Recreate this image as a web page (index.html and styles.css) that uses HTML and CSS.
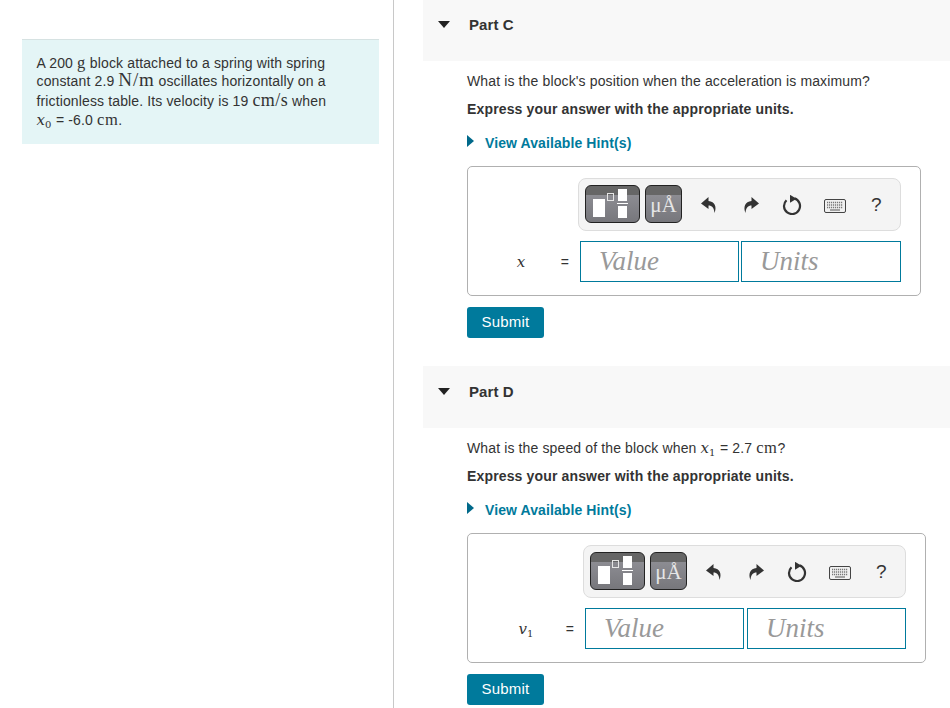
FILE: index.html
```html
<!DOCTYPE html>
<html lang="en">
<head>
<meta charset="utf-8">
<title>Part C and D</title>
<link rel="stylesheet" href="styles.css">
</head>
<body>
<div class="page">
  <aside class="left">
    <div class="intro">
      <div class="intro-line l1">A 200 <span class="m">g</span> block attached to a spring with spring</div>
      <div class="intro-line l2">constant 2.9 <span class="m big">N/m</span> oscillates horizontally on a</div>
      <div class="intro-line">frictionless table. Its velocity is 19 <span class="m big2">cm/s</span> when</div>
      <div class="intro-line"><span class="m"><i>x</i><sub>0</sub></span> = -6.0 <span class="m">cm</span>.</div>
    </div>
  </aside>
  <main class="right">
    <section class="part">
      <header class="part-head"><svg class="caret" viewBox="0 0 12 7"><path d="M0 0H12L6 7Z"/></svg><h2>Part C</h2></header>
      <p class="q">What is the block's position when the acceleration is maximum?</p>
      <p class="ex">Express your answer with the appropriate units.</p>
      <a class="hint"><svg class="hint-arrow" viewBox="0 0 7 12"><path d="M0 0L7 6L0 12Z"/></svg>View Available Hint(s)</a>
      <div class="answer answer-c">
        <div class="toolbar">
          <div class="tool tool-t"><svg viewBox="0 0 53 36" class="tpl"><rect x="7" y="13" width="12" height="18"/><rect class="o" x="21.500" y="7.500" width="6" height="7"/><rect x="32" y="3" width="9" height="12"/><rect x="31" y="17" width="11" height="1"/><rect x="32" y="20" width="9" height="12"/></svg></div>
          <div class="tool tool-u"><span>μÅ</span></div>
          <svg class="ic i1" viewBox="0 0 20 20"><path d="M9.500 2L2 8.500L9.500 14V10.500C13 10.500 15 12.500 15.500 18C18 12 16 6.500 9.500 6Z"/></svg>
          <svg class="ic i2" viewBox="0 0 20 20"><path d="M10.500 2L18 8.500L10.500 14V10.500C7 10.500 5 12.500 4.500 18C2 12 4 6.500 10.500 6Z"/></svg>
          <svg class="ic i3" viewBox="0 0 20 20"><path class="ring" d="M12.500 3.400A8 8 0 1 1 4.500 5.200"/><path d="M8 -.2L14.500 3.800L8 7.800Z"/></svg>
          <svg class="kb" viewBox="0 0 22 14"><rect x=".5" y=".5" width="21" height="13" rx="1.500" fill="#f0f0f0" stroke="#444"/><path d="M3 3.500H19M3 6H19M3 8.500H19" stroke="#777" stroke-width="1.300" stroke-dasharray="1.200 .8"/><path d="M6 11H16" stroke="#777" stroke-width="1.300"/></svg>
          <span class="help">?</span>
        </div>
        <div class="row">
          <span class="var"><i>x</i></span><span class="eq">=</span>
          <input class="box" placeholder="Value"><input class="box box-u" placeholder="Units">
        </div>
      </div>
      <button class="submit">Submit</button>
    </section>
    <section class="part part-d">
      <header class="part-head"><svg class="caret" viewBox="0 0 12 7"><path d="M0 0H12L6 7Z"/></svg><h2>Part D</h2></header>
      <p class="q">What is the speed of the block when <span class="m"><i>x</i><sub>1</sub></span> = 2.7 <span class="m">cm</span>?</p>
      <p class="ex">Express your answer with the appropriate units.</p>
      <a class="hint"><svg class="hint-arrow" viewBox="0 0 7 12"><path d="M0 0L7 6L0 12Z"/></svg>View Available Hint(s)</a>
      <div class="answer answer-d">
        <div class="toolbar">
          <div class="tool tool-t"><svg viewBox="0 0 53 36" class="tpl"><rect x="7" y="13" width="12" height="18"/><rect class="o" x="21.500" y="7.500" width="6" height="7"/><rect x="32" y="3" width="9" height="12"/><rect x="31" y="17" width="11" height="1"/><rect x="32" y="20" width="9" height="12"/></svg></div>
          <div class="tool tool-u"><span>μÅ</span></div>
          <svg class="ic i1" viewBox="0 0 20 20"><path d="M9.500 2L2 8.500L9.500 14V10.500C13 10.500 15 12.500 15.500 18C18 12 16 6.500 9.500 6Z"/></svg>
          <svg class="ic i2" viewBox="0 0 20 20"><path d="M10.500 2L18 8.500L10.500 14V10.500C7 10.500 5 12.500 4.500 18C2 12 4 6.500 10.500 6Z"/></svg>
          <svg class="ic i3" viewBox="0 0 20 20"><path class="ring" d="M12.500 3.400A8 8 0 1 1 4.500 5.200"/><path d="M8 -.2L14.500 3.800L8 7.800Z"/></svg>
          <svg class="kb" viewBox="0 0 22 14"><rect x=".5" y=".5" width="21" height="13" rx="1.500" fill="#f0f0f0" stroke="#444"/><path d="M3 3.500H19M3 6H19M3 8.500H19" stroke="#777" stroke-width="1.300" stroke-dasharray="1.200 .8"/><path d="M6 11H16" stroke="#777" stroke-width="1.300"/></svg>
          <span class="help">?</span>
        </div>
        <div class="row">
          <span class="var"><i>v</i><sub>1</sub></span><span class="eq">=</span>
          <input class="box" placeholder="Value"><input class="box box-u" placeholder="Units">
        </div>
      </div>
      <button class="submit">Submit</button>
    </section>
  </main>
</div>
</body>
</html>
```
FILE: styles.css
```css
* { box-sizing: border-box; }
html, body { margin: 0; height: 100%; overflow: hidden; }
body { font-family: "Liberation Sans", Arial, sans-serif; font-size: 14px; color: #333; background: #fff; letter-spacing: .13px; }
.page { display: flex; height: 708px; }
.left { flex: 0 0 394px; border-right: 1px solid #c8c8c8; padding: 39px 14px 0 22px; }
.intro { background: #e4f5f6; border-top: 1px solid #d6e2e2; height: 105px; padding: 14px 15px 0 14.500px; }
.intro-line { height: 19px; line-height: 19px; white-space: nowrap; }
.l1 { height: 18px; }
.l2 { height: 20px; }
.m { font-family: "Liberation Serif", serif; font-size: 16.500px; line-height: 0; letter-spacing: .6px; }
.m i { font-family: "DejaVu Serif", serif; font-size: 15px; letter-spacing: 0; }
.m sub, .var sub { font-family: "DejaVu Serif", serif; font-size: 10px; line-height: 0; font-style: normal; vertical-align: -3px; }
.big { font-size: 19px; letter-spacing: .8px; }
.big2 { font-size: 18px; letter-spacing: .4px; }
.right { flex: 1; padding-left: 29px; margin-top: -1px; min-width: 0; }
.part-head { display: flex; align-items: center; height: 62px; background: #f8f8f8; padding: 0 0 12px 15px; margin-bottom: 11px; }
.caret { width: 12px; height: 7px; fill: #222; margin-right: 19px; }
.part-head h2 { margin: 0; font-size: 15px; font-weight: 700; color: #333; letter-spacing: .1px; }
.q { margin: 0 0 10px 44px; height: 18px; line-height: 18px; white-space: nowrap; }
.ex { margin: 0 0 16px 44px; height: 18px; line-height: 18px; font-weight: 700; white-space: nowrap; letter-spacing: .15px; }
.hint { display: flex; align-items: center; margin-left: 44px; height: 18px; font-weight: 700; color: #007a9c; letter-spacing: .1px; }
.hint-arrow { width: 7px; height: 12px; fill: #00698a; margin-right: 11px; position: relative; top: -2px; }
.answer { margin: 14px 0 0 44px; height: 130px; border: 1px solid #b0b0b0; border-radius: 5px; display: flex; flex-direction: column; align-items: flex-end; padding: 11px 19px 0 0; }
.answer-c { width: 454px; }
.answer-d { width: 459px; }
.toolbar { display: flex; align-items: center; width: 323px; height: 53px; border: 1px solid #ddd; border-radius: 8px; background: #f4f4f4; padding-left: 6px; }
.tool { height: 38px; margin-bottom: 2px; border: 1px solid #222; border-radius: 6px; background: linear-gradient(#666 0, #666 24%, #8c8c92 26%, #77777c 100%); display: flex; align-items: center; justify-content: center; }
.tool-t { width: 55px; margin-right: 5px; }
.tool-u { width: 37px; margin-right: 17px; font-family: "Liberation Serif", serif; font-size: 21px; color: #e6e6e6; letter-spacing: 0; }
.tool-u span { position: relative; top: 2px; }
.tpl { width: 53px; height: 36px; fill: #fff; }
.tpl .o { fill: none; stroke: #e6e6e6; stroke-width: 1; }
.ic { width: 20px; height: 20px; fill: #333; flex: none; }
.i1 { margin-right: 22px; }
.i2 { margin-right: 21px; }
.i3 { margin-right: 22px; }
.ring { fill: none; stroke: #333; stroke-width: 2.200; }
.kb { width: 22px; height: 14px; flex: none; margin: 2px 25px 0 0; }
.help { font-size: 19px; color: #333; font-family: "Liberation Sans", sans-serif; }
.row { display: flex; align-items: center; margin-top: 10px; }
.var { font-family: "DejaVu Serif", serif; font-size: 15px; width: 44px; margin-right: 10px; text-align: center; }
.eq { width: 24px; text-align: center; margin: 0 3px 0 0; font-size: 14px; }
.box { width: 159px; height: 41px; border: 1px solid #007a9c; background: #fff; padding: 0 0 0 18px; margin: 0; border-radius: 0; font-family: "Liberation Serif", serif; font-style: italic; font-size: 27px; outline: 0; }
.box::placeholder { color: #999; opacity: 1; }
.box-u { width: 160px; margin-left: 2px; }
.answer-d .box-u { width: 159px; margin-left: 3px; }
.submit { display: block; margin: 11px 0 0 44px; width: 77px; height: 31px; border: 0; border-radius: 3px; background: #007a9c; color: #fff; font-family: "Liberation Sans", sans-serif; font-size: 15px; letter-spacing: .2px; padding: 0 0 2px; }
.part-d { margin-top: 28px; }
```
